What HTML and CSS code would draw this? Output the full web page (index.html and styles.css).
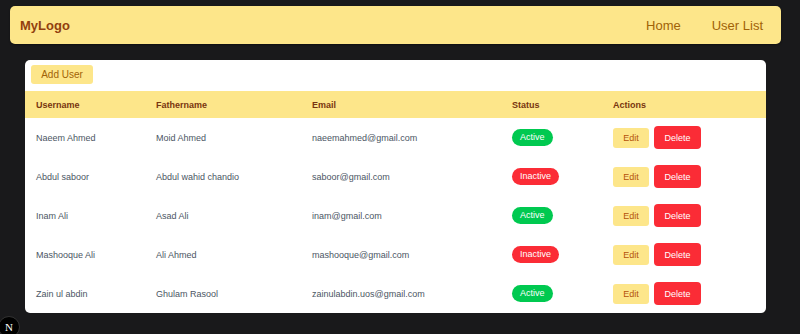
FILE: index.html
```html
<!DOCTYPE html>
<html>
<head>
  <title>User List</title>
  <link rel="stylesheet" href="styles.css">
</head>
<body>
  <nav class="navbar">
    <div class="logo">MyLogo</div>
    <div class="nav-links">
      <a href="#">Home</a>
      <a href="#">User List</a>
    </div>
  </nav>

  <div class="card">
    <div class="toolbar">
      <button class="add-btn">Add User</button>
    </div>
    <table class="users">
      <thead>
        <tr>
          <th class="col-user">Username</th>
          <th class="col-father">Fathername</th>
          <th class="col-email">Email</th>
          <th class="col-status">Status</th>
          <th>Actions</th>
        </tr>
      </thead>
      <tbody>
        <tr>
          <td>Naeem Ahmed</td>
          <td>Moid Ahmed</td>
          <td>naeemahmed@gmail.com</td>
          <td><span class="badge active">Active</span></td>
          <td><button class="edit-btn">Edit</button><button class="delete-btn">Delete</button></td>
        </tr>
        <tr>
          <td>Abdul saboor</td>
          <td>Abdul wahid chandio</td>
          <td>saboor@gmail.com</td>
          <td><span class="badge inactive">Inactive</span></td>
          <td><button class="edit-btn">Edit</button><button class="delete-btn">Delete</button></td>
        </tr>
        <tr>
          <td>Inam Ali</td>
          <td>Asad Ali</td>
          <td>inam@gmail.com</td>
          <td><span class="badge active">Active</span></td>
          <td><button class="edit-btn">Edit</button><button class="delete-btn">Delete</button></td>
        </tr>
        <tr>
          <td>Mashooque Ali</td>
          <td>Ali Ahmed</td>
          <td>mashooque@gmail.com</td>
          <td><span class="badge inactive">Inactive</span></td>
          <td><button class="edit-btn">Edit</button><button class="delete-btn">Delete</button></td>
        </tr>
        <tr>
          <td>Zain ul abdin</td>
          <td>Ghulam Rasool</td>
          <td>zainulabdin.uos@gmail.com</td>
          <td><span class="badge active">Active</span></td>
          <td><button class="edit-btn">Edit</button><button class="delete-btn">Delete</button></td>
        </tr>
      </tbody>
    </table>
  </div>

  <div class="dev-badge">N</div>
</body>
</html>
```

FILE: styles.css
```css
body {
  margin: 0;
  padding: 6px 19px 0 10px;
  background: #19191b;
  font-family: "Liberation Sans", Arial, sans-serif;
  height: 334px;
  box-sizing: border-box;
  overflow: hidden;
}

.navbar {
  display: flex;
  justify-content: space-between;
  align-items: center;
  height: 38px;
  padding: 0 18px 0 10px;
  background: #fde68a;
  border-radius: 5px;
  box-shadow: 0 1px 2px rgba(0,0,0,0.4);
}
.logo {
  font-size: 13px;
  font-weight: bold;
  color: #92400e;
}
.nav-links {
  display: flex;
  gap: 31px;
}
.nav-links a {
  font-size: 13px;
  color: #a16207;
  text-decoration: none;
}

.card {
  margin: 16px 15px 0 15px;
  background: #fff;
  border-radius: 5px;
  overflow: hidden;
}
.toolbar {
  padding: 5px 6px 7px;
}
.add-btn {
  display: block;
  height: 19px;
  width: 62px;
  padding: 0;
  border: none;
  border-radius: 3px;
  background: #fde68a;
  color: #a16207;
  font-family: inherit;
  font-size: 10px;
}

.users {
  width: 100%;
  border-collapse: collapse;
  table-layout: fixed;
}
.users th {
  background: #fde68a;
  color: #78350f;
  font-size: 9px;
  font-weight: bold;
  text-align: left;
  height: 27px;
  padding: 0 0 0 11px;
}
.users td {
  height: 39px;
  padding: 0 0 0 11px;
  font-size: 9px;
  color: #4b5563;
}
.col-user { width: 109px; }
.col-father { width: 145px; }
.col-email { width: 189px; }
.col-status { width: 90px; }

.badge {
  display: inline-block;
  height: 17px;
  line-height: 17px;
  padding: 0 8px;
  border-radius: 9px;
  color: #fff;
  font-size: 9px;
}
.badge.active { background: #00c950; }
.badge.inactive { background: #fb2c36; }

.edit-btn, .delete-btn {
  border: none;
  font-family: inherit;
  font-size: 9px;
  vertical-align: middle;
  padding: 0;
}
.edit-btn {
  width: 36px;
  height: 20px;
  border-radius: 3px;
  background: #fde68a;
  color: #b45309;
}
.delete-btn {
  width: 47px;
  height: 23px;
  margin-left: 5px;
  border-radius: 4px;
  background: #fb2c36;
  color: #fff;
}

.dev-badge {
  position: absolute;
  left: -2px;
  top: 316px;
  width: 22px;
  height: 22px;
  border-radius: 50%;
  background: #000;
  border: 1px solid #333;
  color: #fff;
  font-family: "Liberation Serif", serif;
  font-size: 11px;
  text-align: center;
  line-height: 20px;
  box-sizing: border-box;
}
```
